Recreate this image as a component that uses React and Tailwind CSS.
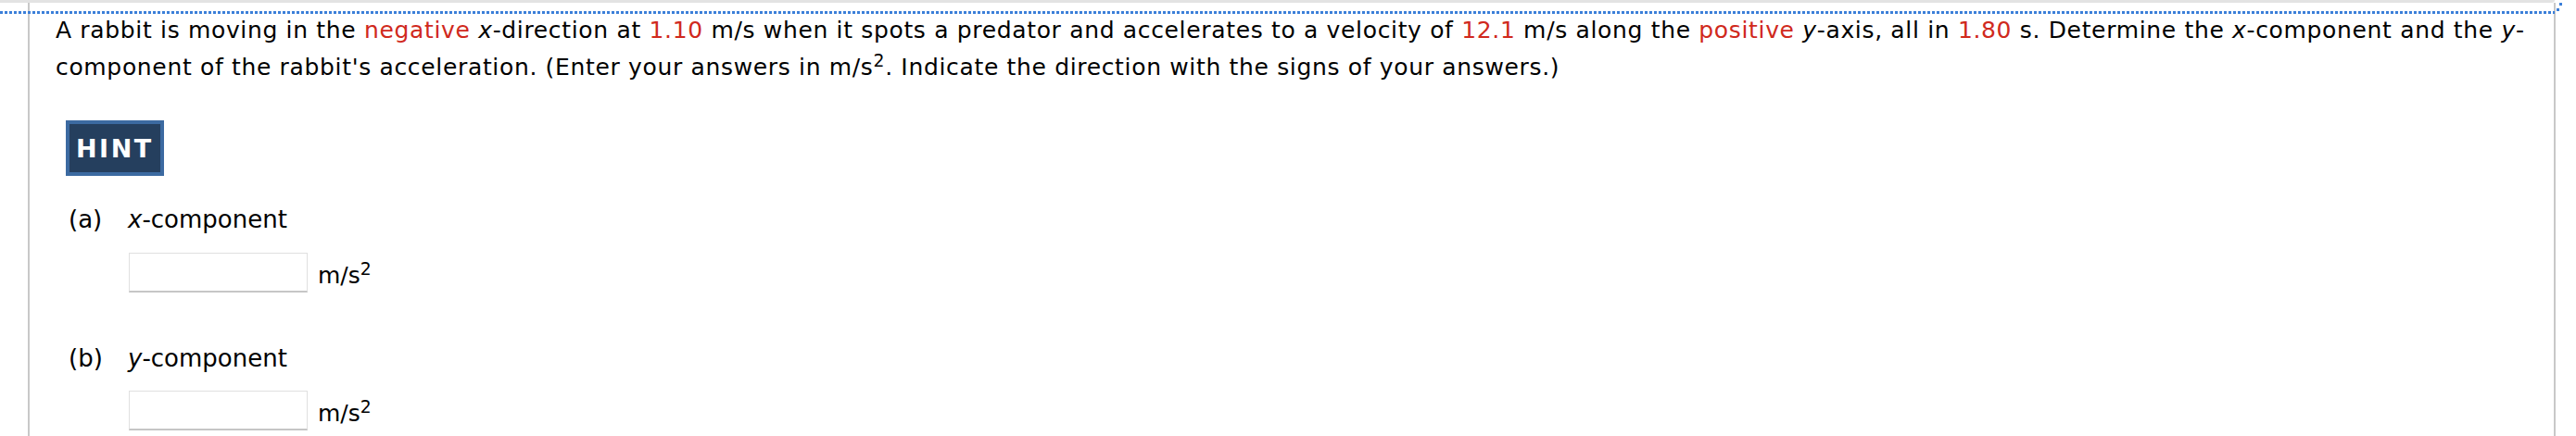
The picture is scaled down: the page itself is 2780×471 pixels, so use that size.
export default function App() {
  const red = "text-[#d0291d]";
  return (
    <div className="relative w-[2780px] h-[471px] overflow-hidden bg-white font-['DejaVu_Sans',Verdana,sans-serif] text-black">
      {/* bottom edge of the previous block */}
      <div className="h-[3px] w-[2757px] bg-[#e3e3e3] rounded-br-[3px]" />

      <div className="ml-[30px] w-[2728px] h-[468px] border-x-2 border-[#c8c8c8] pl-[28px]">
        <div className="pt-[10px] text-[25px] leading-[40px] tracking-[0.66px] whitespace-nowrap">
          <div>
            A rabbit is moving in the <span className={red}>negative</span> <i>x</i>-direction at{" "}
            <span className={red}>1.10</span> m/s when it spots a predator and accelerates to a velocity of{" "}
            <span className={red}>12.1</span> m/s along the <span className={red}>positive</span> <i>y</i>-axis,
            all in <span className={red}>1.80</span> s. Determine the <i>x</i>-component and the <i>y</i>-
          </div>
          <div>
            component of the rabbit's acceleration. (Enter your answers in m/s<sup>2</sup>. Indicate the
            direction with the signs of your answers.)
          </div>
        </div>

        <div className="mt-[37px] ml-[11px] flex h-[60px] w-[106px] items-center border-4 border-[#3c6aa1] bg-[#253f5e] pl-[7px]">
          <span className="text-[27px] font-bold leading-none tracking-[2.5px] text-white">HINT</span>
        </div>

        <Part letter="(a)" axis="x" first />
        <Part letter="(b)" axis="y" />
      </div>

      {/* dotted focus outline of the block above */}
      <div className="absolute left-0 top-[12px] h-[3px] w-[2757px] bg-[repeating-linear-gradient(90deg,#3b7fd9_0px,#3b7fd9_3px,transparent_3px,transparent_5px)]" />
      <div className="absolute left-[2759px] top-[9px] h-[3px] w-[3px] bg-[#3b7fd9]" />
      <div className="absolute left-[2762px] top-[3px] h-[3px] w-[3px] bg-[#3b7fd9]" />
    </div>
  );
}

function Part({ letter, axis, first }) {
  return (
    <div className={first ? "mt-[28px]" : "mt-[52px]"}>
      <div className="ml-[14px] flex text-[26px] leading-[39px]">
        <span className="w-[64px]">{letter}</span>
        <span>
          <i>{axis}</i>-component
        </span>
      </div>
      <div className={`${first ? "mt-[16px]" : "mt-[15px]"} ml-[79px] flex items-start`}>
        <input
          type="text"
          className="h-[43px] w-[193px] border border-[#e0e0e0] border-b-2 border-b-[#c6c6c6] bg-white outline-none"
        />
        <span className="ml-[11px] mt-[12px] text-[25px] leading-[25px]">
          m/s<sup>2</sup>
        </span>
      </div>
    </div>
  );
}
